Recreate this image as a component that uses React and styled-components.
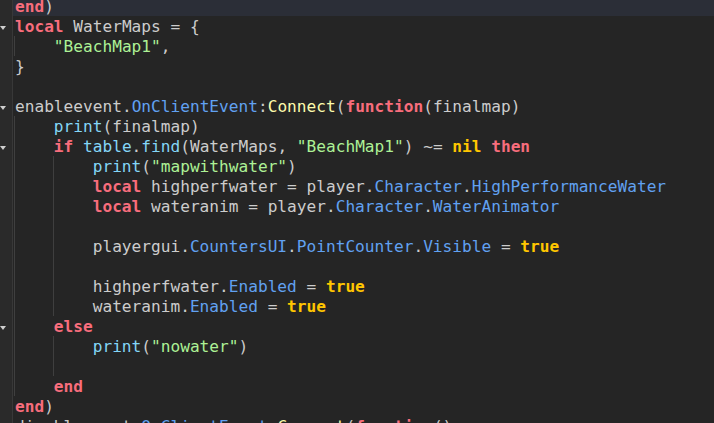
import styled, { createGlobalStyle } from "styled-components";

const GlobalStyle = createGlobalStyle`
  html, body {
    margin: 0;
    padding: 0;
    background: #252525;
    overflow: hidden;
  }
`;

const colors = {
  tx: "#cccccc",
  kw: "#f86d7c",
  str: "#adf195",
  fn: "#84d6f7",
  prop: "#61a1f1",
  method: "#fdfbac",
  lit: "#ffc600",
};

const Editor = styled.div`
  display: flex;
  width: 714px;
  height: 423px;
  overflow: hidden;
  background: #252525;
  font-family: "DejaVu Sans Mono", "Liberation Mono", monospace;
  font-size: 16.15px;
`;

const Gutter = styled.div`
  width: 12px;
  flex-shrink: 0;
  background: #2a2a2a;
  border-right: 1px solid #383838;
  margin-top: -4px;
`;

const GutterCell = styled.div`
  height: 20px;
  display: flex;
  align-items: center;
`;

const Code = styled.div`
  flex: 1;
  margin-top: -4px;
`;

const Row = styled.div`
  display: flex;
  align-items: stretch;
  height: 20px;
  line-height: 22px;
  white-space: pre;
  padding-left: 2px;
  background: ${(p) => (p.$highlight ? "#2b2e37" : "transparent")};
`;

const Indent = styled.span`
  display: inline-block;
  box-sizing: border-box;
  width: 4ch;
  flex-shrink: 0;
  border-left: 1px solid ${(p) => (p.$guide ? "#3f3f3f" : "transparent")};
  margin-left: -1px;
  margin-right: 1px;
`;

const Token = styled.span`
  color: ${(p) => colors[p.$kind]};
  font-weight: ${(p) => (p.$kind === "kw" || p.$kind === "lit" ? 700 : 400)};
`;

const FoldArrow = () => (
  <svg width="6" height="5" viewBox="0 0 6 5" style={{ display: "block", marginTop: 3 }}>
    <path d="M0 1 L6 1 L3 5 Z" fill="#cfcfcf" />
  </svg>
);

const lines = [
  { highlight: true, t: [["kw", "end"], ["tx", ")"]] },
  { fold: true, t: [["kw", "local"], ["tx", " WaterMaps = {"]] },
  { indent: 1, t: [["str", '"BeachMap1"'], ["tx", ","]] },
  { t: [["tx", "}"]] },
  { t: [] },
  {
    fold: true,
    t: [
      ["tx", "enableevent."],
      ["prop", "OnClientEvent"],
      ["tx", ":"],
      ["method", "Connect"],
      ["tx", "("],
      ["kw", "function"],
      ["tx", "(finalmap)"],
    ],
  },
  { indent: 1, t: [["fn", "print"], ["tx", "(finalmap)"]] },
  {
    indent: 1,
    fold: true,
    t: [
      ["kw", "if"],
      ["tx", " "],
      ["fn", "table"],
      ["tx", "."],
      ["fn", "find"],
      ["tx", "(WaterMaps, "],
      ["str", '"BeachMap1"'],
      ["tx", ") ~= "],
      ["lit", "nil"],
      ["tx", " "],
      ["kw", "then"],
    ],
  },
  { indent: 2, t: [["fn", "print"], ["tx", "("], ["str", '"mapwithwater"'], ["tx", ")"]] },
  {
    indent: 2,
    t: [
      ["kw", "local"],
      ["tx", " highperfwater = player."],
      ["prop", "Character"],
      ["tx", "."],
      ["prop", "HighPerformanceWater"],
    ],
  },
  {
    indent: 2,
    t: [
      ["kw", "local"],
      ["tx", " wateranim = player."],
      ["prop", "Character"],
      ["tx", "."],
      ["prop", "WaterAnimator"],
    ],
  },
  { indent: 2, t: [] },
  {
    indent: 2,
    t: [
      ["tx", "playergui."],
      ["prop", "CountersUI"],
      ["tx", "."],
      ["prop", "PointCounter"],
      ["tx", "."],
      ["prop", "Visible"],
      ["tx", " = "],
      ["lit", "true"],
    ],
  },
  { indent: 2, t: [] },
  { indent: 2, t: [["tx", "highperfwater."], ["prop", "Enabled"], ["tx", " = "], ["lit", "true"]] },
  { indent: 2, t: [["tx", "wateranim."], ["prop", "Enabled"], ["tx", " = "], ["lit", "true"]] },
  { indent: 1, fold: true, t: [["kw", "else"]] },
  { indent: 2, t: [["fn", "print"], ["tx", "("], ["str", '"nowater"'], ["tx", ")"]] },
  { indent: 2, t: [] },
  { indent: 1, t: [["kw", "end"]] },
  { t: [["kw", "end"], ["tx", ")"]] },
  {
    t: [
      ["tx", "disableevent."],
      ["prop", "OnClientEvent"],
      ["tx", ":"],
      ["method", "Connect"],
      ["tx", "("],
      ["kw", "function"],
      ["tx", "()"],
    ],
  },
];

export default function App() {
  return (
    <>
      <GlobalStyle />
      <Editor>
        <Gutter>
          {lines.map((line, i) => (
            <GutterCell key={i}>{line.fold && <FoldArrow />}</GutterCell>
          ))}
        </Gutter>
        <Code>
          {lines.map((line, i) => (
            <Row key={i} $highlight={line.highlight}>
              {Array.from({ length: line.indent || 0 }).map((_, j) => (
                <Indent key={j} $guide />
              ))}
              {line.t.map(([kind, text], j) => (
                <Token key={j} $kind={kind}>
                  {text}
                </Token>
              ))}
            </Row>
          ))}
        </Code>
      </Editor>
    </>
  );
}
